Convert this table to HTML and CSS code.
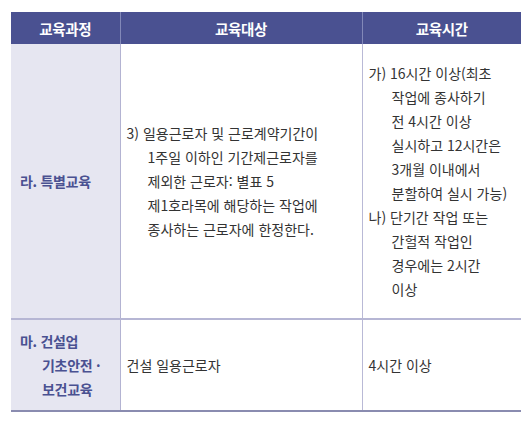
FILE: index.html
```
<!DOCTYPE html>
<html lang="ko">
<head>
<meta charset="utf-8">
<link rel="stylesheet" href="styles.css">
</head>
<body>
<table class="edu">
  <colgroup>
    <col class="c1"><col class="c2"><col class="c3">
  </colgroup>
  <thead>
    <tr><th>교육과정</th><th>교육대상</th><th>교육시간</th></tr>
  </thead>
  <tbody>
    <tr class="r1">
      <td class="course"><div class="l">라. 특별교육</div></td>
      <td class="target">
        <div class="l">3) 일용근로자 및 근로계약기간이</div>
        <div class="l ind">1주일 이하인 기간제근로자를</div>
        <div class="l ind">제외한 근로자: 별표 5</div>
        <div class="l ind">제1호라목에 해당하는 작업에</div>
        <div class="l ind">종사하는 근로자에 한정한다.</div>
      </td>
      <td class="time">
        <div class="l">가) 16시간 이상(최초</div>
        <div class="l ind">작업에 종사하기</div>
        <div class="l ind">전 4시간 이상</div>
        <div class="l ind">실시하고 12시간은</div>
        <div class="l ind">3개월 이내에서</div>
        <div class="l ind">분할하여 실시 가능)</div>
        <div class="l">나) 단기간 작업 또는</div>
        <div class="l ind">간헐적 작업인</div>
        <div class="l ind">경우에는 2시간</div>
        <div class="l ind">이상</div>
      </td>
    </tr>
    <tr class="r2">
      <td class="course">
        <div class="l">마. 건설업</div>
        <div class="l ind">기초안전 ·</div>
        <div class="l ind">보건교육</div>
      </td>
      <td class="target"><div class="l">건설 일용근로자</div></td>
      <td class="time"><div class="l">4시간 이상</div></td>
    </tr>
  </tbody>
</table>
</body>
</html>
```
FILE: styles.css
```
html, body {
  margin: 0;
  padding: 0;
  background: #ffffff;
}
body {
  padding: 12px 7px 0 11px;
  font-family: "Noto Sans CJK KR", "Noto Sans", sans-serif;
  color: #333333;
}
.edu {
  border-collapse: collapse;
  table-layout: fixed;
  width: 510px;
}
.c1 { width: 109px; }
.c2 { width: 242px; }
.c3 { width: 159px; }
.edu th {
  height: 32px;
  padding: 0;
  background: #4a5191;
  color: #ffffff;
  font-size: 14.5px;
  font-weight: 700;
  text-align: center;
  vertical-align: middle;
  border-left: 1px solid #8288b8;
  letter-spacing: -0.3px;
}
.edu th:first-child { border-left: none; }
.edu td {
  padding: 9px 6px 9px 6px;
  vertical-align: middle;
  font-size: 14px;
  line-height: 24px;
  border-left: 1px solid #b9b9d6;
  white-space: nowrap;
}
.edu td:first-child { border-left: none; }
.edu td.course {
  background: #e6e6f1;
  color: #4a5191;
  font-weight: 700;
  padding-left: 9px;
  border-right: 1px solid #b3b3d2;
  letter-spacing: -0.3px;
}
.edu td.time { padding-left: 6px; }
.r1 td { border-bottom: 2px solid #b6b6d4; height: 256px; }
.r2 td { border-bottom: 2px solid #8a8cb0; height: 72px; }
.l { height: 24px; }
.target .ind { padding-left: 21px; }
.time .ind { padding-left: 23px; }
.course .ind { padding-left: 22px; }
```
